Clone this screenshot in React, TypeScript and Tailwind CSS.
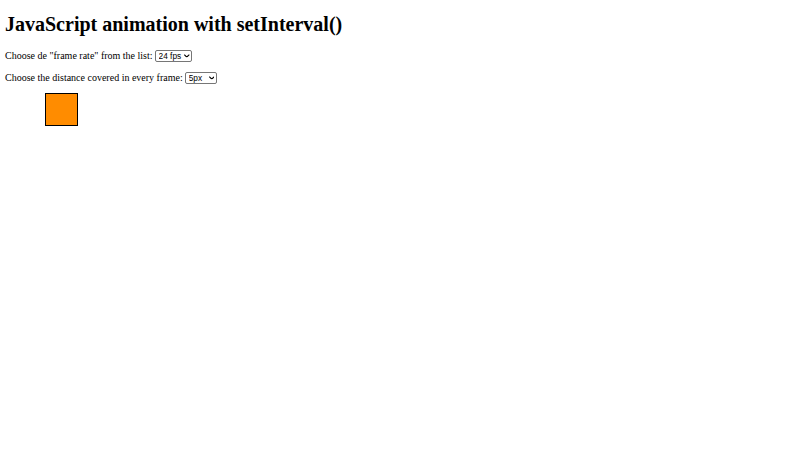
import React from "react";

const Chevron = () => (
    <svg
        viewBox="0 0 10 6"
        className="pointer-events-none absolute right-[2.5px] top-1/2 -translate-y-1/2 w-[5.5px] h-[3.5px]"
    >
        <path d="M1 1 L5 5 L9 1" fill="none" stroke="#000" strokeWidth="2.2" strokeLinecap="round" strokeLinejoin="round" />
    </svg>
)

const App = () => {
    return (
        <div className="min-h-screen bg-white text-black px-[5px] pt-[13.4px] font-['Liberation_Serif',serif]">
            <h1 className="text-[20px] leading-[23px] font-bold mb-[13.4px]">JavaScript animation with setInterval()</h1>
            <p className="text-[10px] leading-[12px] h-[12px] flex items-center">
                Choose de "frame rate" from the list:&nbsp;
                <span className="relative inline-flex">
                    <select
                        defaultValue="24"
                        className="appearance-none w-[37px] h-[12px] text-[8.3px] leading-[10px] border border-[#767676] rounded-[2px] bg-white text-black pl-[2.5px] font-['Liberation_Sans',Arial,sans-serif]"
                    >
                        <option value="12">12 fps</option>
                        <option value="24">24 fps</option>
                        <option value="30">30 fps</option>
                        <option value="60">60 fps</option>
                    </select>
                    <Chevron />
                </span>
            </p>
            <p className="mt-[10px] text-[10px] leading-[12px] h-[12px] flex items-center">
                Choose the distance covered in every frame:&nbsp;
                <span className="relative inline-flex">
                    <select
                        defaultValue="5"
                        className="appearance-none w-[31.5px] h-[12px] text-[8.3px] leading-[10px] border border-[#767676] rounded-[2px] bg-white text-black pl-[2.5px] font-['Liberation_Sans',Arial,sans-serif]"
                    >
                        <option value="1">1px</option>
                        <option value="5">5px</option>
                        <option value="10">10px</option>
                    </select>
                    <Chevron />
                </span>
            </p>
            <div className="mt-[9.5px] ml-[40px] w-[33px] h-[33px] border border-black bg-[#ff8c00]"></div>
        </div>
    )
}

export default App
